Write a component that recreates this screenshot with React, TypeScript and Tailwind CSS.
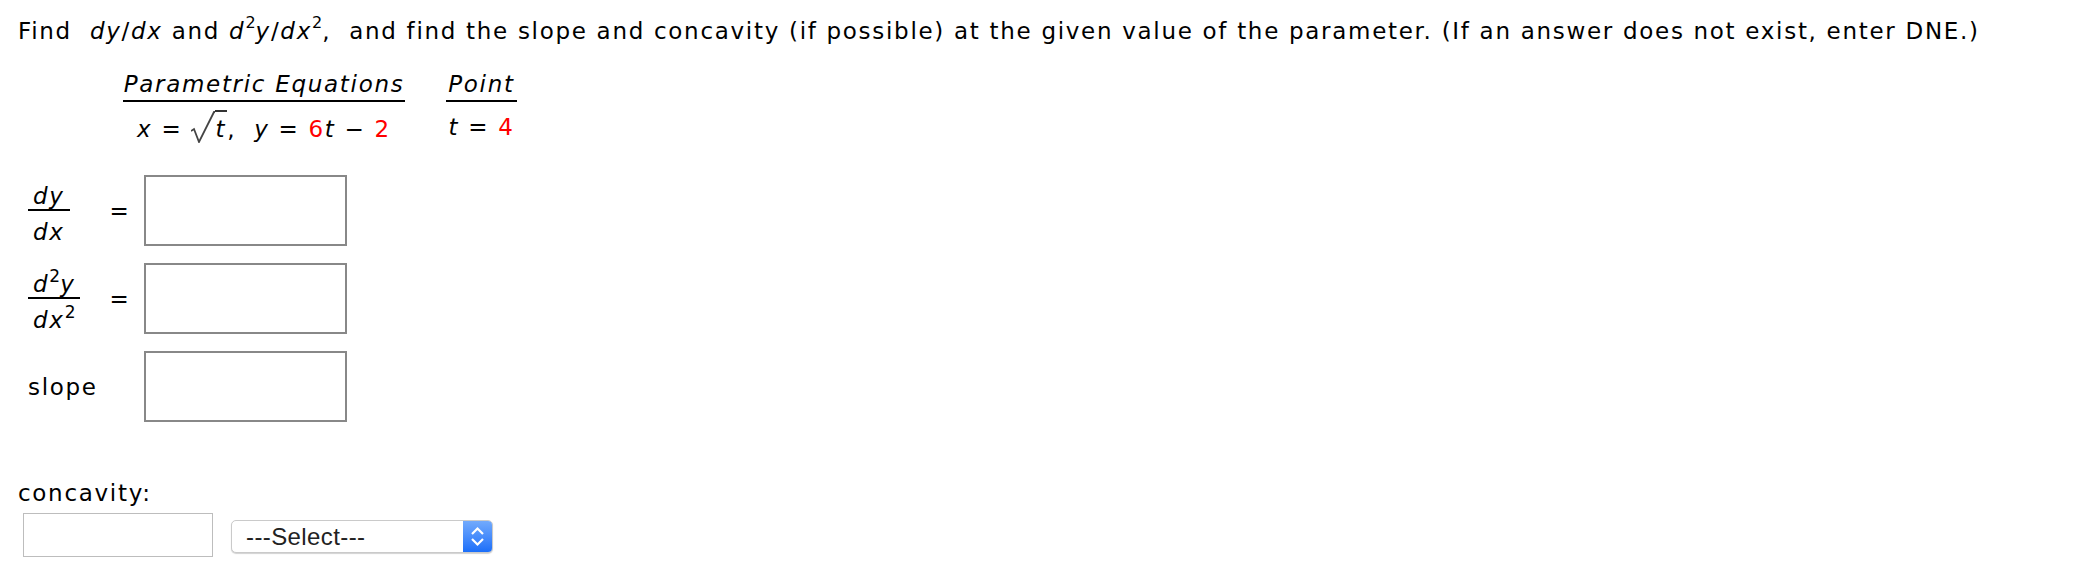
const RED = "text-[#ff0000]";

const Sup = ({ children, big }: { children: React.ReactNode; big?: boolean }) => (
  <span
    className={
      big
        ? "not-italic relative -top-[10px] text-[17px] leading-none tracking-normal"
        : "not-italic relative -top-[11px] text-[16px] leading-none tracking-normal"
    }
  >
    {children}
  </span>
);

const Fraction = ({ top, bottom }: { top: React.ReactNode; bottom: React.ReactNode }) => (
  <div className="flex flex-col items-stretch italic text-center w-fit">
    <div className="pt-[6px] pb-[1px] px-[5px] leading-[24px]">{top}</div>
    <div className="h-[2px] bg-black" />
    <div className="pt-[9px] px-[5px] leading-[24px]">{bottom}</div>
  </div>
);

const AnswerBox = () => (
  <div className="ml-[8px] w-[203px] h-[71px] border-2 border-[#888888] bg-white" />
);

export default function App() {
  return (
    <div className="w-[2080px] h-[582px] bg-white text-black font-['DejaVu_Sans',Verdana,sans-serif] text-[23px] leading-[32px] tracking-[1.7px] pt-[15px] pl-[18px]">
      {/* Question */}
      <p className="whitespace-nowrap">
        Find{"\u00a0\u00a0"}
        <i>dy</i>/<i>dx</i> and <i>d</i>
        <Sup>2</Sup>
        <i>y</i>/<i>dx</i>
        <Sup>2</Sup>,{"\u00a0\u00a0"}and find the slope and concavity (if possible) at the given
        value of the parameter. (If an answer does not exist, enter DNE.)
      </p>

      {/* Table */}
      <div className="flex ml-[105px] mt-[21px] gap-[41px]">
        <div className="flex flex-col w-[282px] items-center">
          <div className="w-full text-center italic border-b-2 border-black">
            Parametric Equations
          </div>
          <div className="pt-[9px] whitespace-nowrap h-[41px]">
            <i>x</i> ={" "}
            <svg
              width="24"
              height="32"
              viewBox="0 0 24 32"
              className="inline-block align-[-6px]"
            >
              <polyline
                points="0,20 3,18 8,31 23,1 24,1"
                fill="none"
                stroke="#444"
                strokeWidth="1.8"
                strokeLinejoin="miter"
              />
            </svg>
            <span className="italic border-t-2 border-[#333] pt-[4px] pr-[1px]">t</span>,
            {"\u00a0\u00a0"}
            <i>y</i> = <span className={RED}>6</span>
            <i>t</i> − <span className={RED}>2</span>
          </div>
        </div>
        <div className="flex flex-col w-[71px] items-center">
          <div className="w-full text-center italic border-b-2 border-black">Point</div>
          <div className="pt-[9px] whitespace-nowrap">
            <i>t</i> = <span className={RED}>4</span>
          </div>
        </div>
      </div>

      {/* Answer rows */}
      <div className="flex flex-col gap-[17px] mt-[32px] pl-[10px]">
        <div className="flex items-center h-[71px]">
          <div className="w-[76px] flex">
            <Fraction top={<>dy</>} bottom={<>dx</>} />
          </div>
          <div className="w-[32px] text-center">=</div>
          <AnswerBox />
        </div>
        <div className="flex items-center h-[71px]">
          <div className="w-[76px] flex">
            <Fraction
              top={
                <>
                  d<Sup big>2</Sup>y
                </>
              }
              bottom={
                <>
                  dx<Sup big>2</Sup>
                </>
              }
            />
          </div>
          <div className="w-[32px] text-center">=</div>
          <AnswerBox />
        </div>
        <div className="flex items-center h-[71px]">
          <div className="w-[76px]">slope</div>
          <div className="w-[32px]" />
          <AnswerBox />
        </div>
      </div>

      {/* Concavity */}
      <div className="mt-[55px]">concavity:</div>
      <div className="flex items-start mt-[4px] ml-[5px]">
        <div className="w-[190px] h-[44px] border border-[#bdbdbd] bg-white" />
        <div className="ml-[18px] mt-[7px] w-[262px] h-[33px] flex rounded-[5px] border border-[#cacaca] bg-white shadow-[0_1px_1px_rgba(0,0,0,0.18)] overflow-hidden">
          <div className="flex-1 pl-[14px] flex items-center font-['Liberation_Sans',Arial,sans-serif] text-[24px] tracking-[0.4px] text-[#222]">
            ---Select---
          </div>
          <div className="w-[29px] bg-linear-to-b from-[#72aafc] to-[#1a6ef9] flex items-center justify-center">
            <svg width="29" height="33" viewBox="0 0 29 33">
              <polyline
                points="9,14 14.5,8.5 20,14"
                fill="none"
                stroke="#fff"
                strokeWidth="2.2"
              />
              <polyline
                points="9,19 14.5,24.5 20,19"
                fill="none"
                stroke="#fff"
                strokeWidth="2.2"
              />
            </svg>
          </div>
        </div>
      </div>
    </div>
  );
}
